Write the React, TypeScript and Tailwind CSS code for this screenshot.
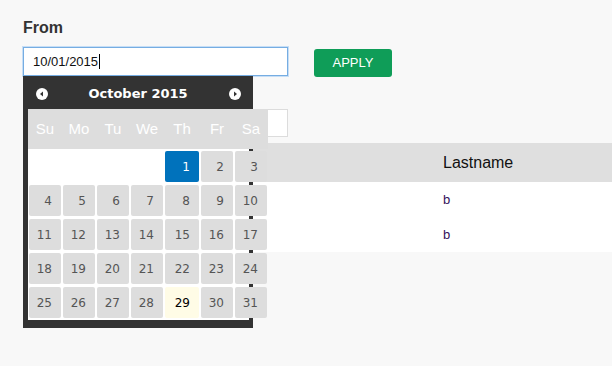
import React from "react";

const cols = "grid grid-cols-[32px_32px_32px_32px_34px_32px_32px] gap-x-[2px]";

function NavIcon({ dir }: { dir: "prev" | "next" }) {
  return (
    <svg width="12" height="12" viewBox="0 0 12 12">
      <circle cx="6" cy="6" r="6" fill="#ffffff" />
      {dir === "prev" ? (
        <polygon points="4,6 7,3.5 7,8.5" fill="#333333" />
      ) : (
        <polygon points="8,6 5,3.5 5,8.5" fill="#333333" />
      )}
    </svg>
  );
}

export default function App() {
  const weeks: (number | null)[][] = [
    [null, null, null, null, 1, 2, 3],
    [4, 5, 6, 7, 8, 9, 10],
    [11, 12, 13, 14, 15, 16, 17],
    [18, 19, 20, 21, 22, 23, 24],
    [25, 26, 27, 28, 29, 30, 31],
  ];
  const names = ["Su", "Mo", "Tu", "We", "Th", "Fr", "Sa"];

  return (
    <div className="relative h-[366px] w-[612px] overflow-hidden bg-[#f8f8f8] font-['Liberation_Sans',Arial,sans-serif]">
      <div className="pl-[23px] pt-[19px]">
        <div className="text-[16px] font-bold leading-[18px] text-[#333]">From</div>
        <div className="mt-[10px] flex items-start">
          <div className="flex h-[29px] w-[265px] items-center border border-[#76ade2] bg-white pl-[9px] text-[13px] text-[#111] shadow-[0_0_0_1px_#c6def6]">
            <span>10/01/2015</span>
            <span className="ml-[1px] inline-block h-[15px] w-[1px] bg-black" />
          </div>
          <button className="ml-[26px] mt-[2px] flex h-[28px] w-[78px] items-center justify-center rounded-[3px] bg-[#0f9d58] text-[13px] text-white">
            APPLY
          </button>
        </div>
        <div className="mt-[32px] h-[28px] w-[265px] border border-[#dcdcdc] bg-white" />
        <div className="mt-[6px] w-[589px]">
          <div className="flex h-[39px] items-center bg-[#dfdfdf] pl-[420px] text-[16px] text-[#111]">Lastname</div>
          <div className="flex h-[35px] items-center bg-white pl-[420px] text-[13px] text-[#35115a]">b</div>
          <div className="flex h-[35px] items-center bg-white pl-[420px] text-[13px] text-[#35115a]">b</div>
        </div>
      </div>

      {/* datepicker popup */}
      <div className="absolute left-[23px] top-[76px] h-[252px] w-[230px] bg-[#333]">
        <div className="relative flex h-[33px] items-center justify-center">
          <div className="absolute left-[13px] top-[12px]">
            <NavIcon dir="prev" />
          </div>
          <span className="mt-[3px] font-['DejaVu_Sans',Verdana,sans-serif] text-[13px] font-bold text-white">October 2015</span>
          <div className="absolute right-[12px] top-[12px]">
            <NavIcon dir="next" />
          </div>
        </div>
        <div className="ml-[5px] h-[211px] w-[221px] bg-white">
          <div className={`${cols} h-[40px] w-[240px] items-center bg-[#dddddd] pl-[1px]`}>
            {names.map((n) => (
              <div key={n} className="text-center text-[15px] text-white">
                {n}
              </div>
            ))}
          </div>
          <div className="mt-[2px] flex flex-col gap-y-[3px] pl-[1px]">
            {weeks.map((w, i) => (
              <div key={i} className={`${cols} h-[31px]`}>
                {w.map((d, j) => {
                  if (d === null) return <div key={j} />;
                  let cls = "bg-[#dddddd] text-[#555]";
                  if (d === 1) cls = "bg-[#0072bc] text-white";
                  if (d === 29) cls = "bg-[#fffce6] text-black";
                  return (
                    <div
                      key={j}
                      className={`flex items-center justify-end rounded-[2px] pr-[9px] font-['DejaVu_Sans',Verdana,sans-serif] text-[12px] ${cls}`}
                    >
                      {d}
                    </div>
                  );
                })}
              </div>
            ))}
          </div>
        </div>
      </div>
    </div>
  );
}
